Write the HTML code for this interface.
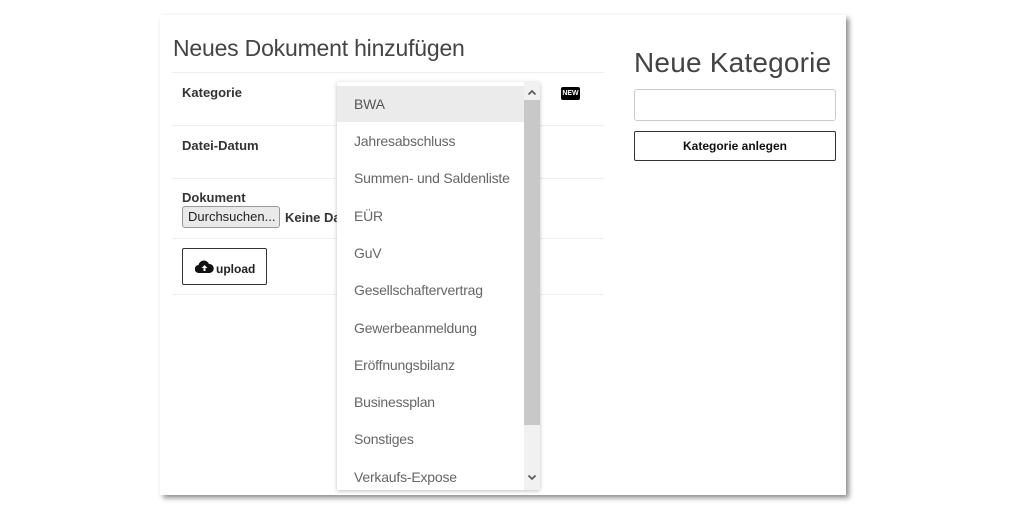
<!DOCTYPE html>
<html><head><meta charset="utf-8"><style>
*{margin:0;padding:0;box-sizing:border-box}
body{width:1024px;height:523px;background:#fff;position:relative;overflow:hidden;font-family:"Liberation Sans",Arial,sans-serif}
.card{position:absolute;left:160px;top:15px;width:686px;height:480px;background:#fff;box-shadow:3px 3px 5px rgba(0,0,0,.45)}
.abs{position:absolute}
h1{position:absolute;left:173px;top:35px;font-weight:normal;font-size:23px;color:#444;letter-spacing:-0.2px;white-space:nowrap}
h2{position:absolute;left:634px;top:47px;font-weight:normal;font-size:28px;color:#444;letter-spacing:.2px;white-space:nowrap}
.line{position:absolute;left:172px;width:432px;height:1px;background:#eee}
.lbl{position:absolute;left:182px;font-size:13px;font-weight:bold;color:#333}
.dd{position:absolute;left:337px;top:82px;width:203px;height:408px;background:#fff;box-shadow:0 1px 4px rgba(0,0,0,.25);overflow:hidden}
.it{position:absolute;left:0;width:187px;height:36px;line-height:36px;padding-left:17px;font-size:14px;color:#666;letter-spacing:-0.2px}
</style></head><body>
<div class="card"></div>
<h1>Neues Dokument hinzufügen</h1>
<div class="line" style="top:72px"></div>
<div class="line" style="top:125px"></div>
<div class="line" style="top:178px"></div>
<div class="line" style="top:238px"></div>
<div class="line" style="top:294px"></div>
<div class="lbl" style="top:85px">Kategorie</div>
<div class="lbl" style="top:138px">Datei-Datum</div>
<div class="lbl" style="top:190px">Dokument</div>
<div class="abs" style="left:182px;top:206px;width:98px;height:22px;border:1px solid #999;border-radius:3px;background:#e9e9e9;font-size:13px;line-height:20px;padding-left:5px;color:#222">Durchsuchen...</div>
<div class="abs" style="left:285px;top:210px;font-size:13px;font-weight:bold;color:#333">Keine Da</div>
<div class="abs" style="left:182px;top:248px;width:85px;height:37px;border:1px solid #333;border-radius:2px;font-size:12px;font-weight:bold;color:#222;line-height:41px;padding-left:12px">
<svg width="19" height="14" viewBox="0 0 19 14" style="vertical-align:-1px;margin-right:2px"><path d="M4 13a4 4 0 0 1-.5-8A5.5 5.5 0 0 1 14 4a4.5 4.5 0 0 1 0.5 9z" fill="#111"/><path d="M9.5 5l-3 3h2v3h2v-3h2z" fill="#fff"/></svg>upload</div>
<div class="abs" style="left:561px;top:87px;width:19px;height:13px;background:#000;border-radius:2px;color:#fff;font-size:7px;font-weight:bold;line-height:13px;text-align:center">NEW</div>
<div class="dd">
<div class="abs" style="left:0;top:4px;width:187px;height:36px;background:#ebebeb"></div>
<div class="it" style="top:4px;color:#555">BWA</div>
<div class="it" style="top:41px">Jahresabschluss</div>
<div class="it" style="top:78px">Summen- und Saldenliste</div>
<div class="it" style="top:116px">EÜR</div>
<div class="it" style="top:153px">GuV</div>
<div class="it" style="top:190px">Gesellschaftervertrag</div>
<div class="it" style="top:228px">Gewerbeanmeldung</div>
<div class="it" style="top:265px">Eröffnungsbilanz</div>
<div class="it" style="top:302px">Businessplan</div>
<div class="it" style="top:339px">Sonstiges</div>
<div class="it" style="top:377px">Verkaufs-Expose</div>
<div class="abs" style="left:187px;top:0;width:16px;height:408px;background:#f1f1f1"></div>
<div class="abs" style="left:187px;top:18px;width:16px;height:325px;background:#c8c8c8"></div>
<svg class="abs" style="left:190px;top:7px" width="10" height="7" viewBox="0 0 10 7"><path d="M1.5 5.5L5 2l3.5 3.5" fill="none" stroke="#555" stroke-width="1.6"/></svg>
<svg class="abs" style="left:190px;top:392px" width="10" height="7" viewBox="0 0 10 7"><path d="M1.5 1.5L5 5l3.5-3.5" fill="none" stroke="#555" stroke-width="1.6"/></svg>
</div>
<h2>Neue Kategorie</h2>
<div class="abs" style="left:634px;top:89px;width:202px;height:32px;border:1px solid #ccc;border-radius:3px"></div>
<div class="abs" style="left:634px;top:131px;width:202px;height:30px;border:1px solid #333;border-radius:2px;font-size:12px;font-weight:bold;color:#111;text-align:center;line-height:28px">Kategorie anlegen</div>
</body></html>
